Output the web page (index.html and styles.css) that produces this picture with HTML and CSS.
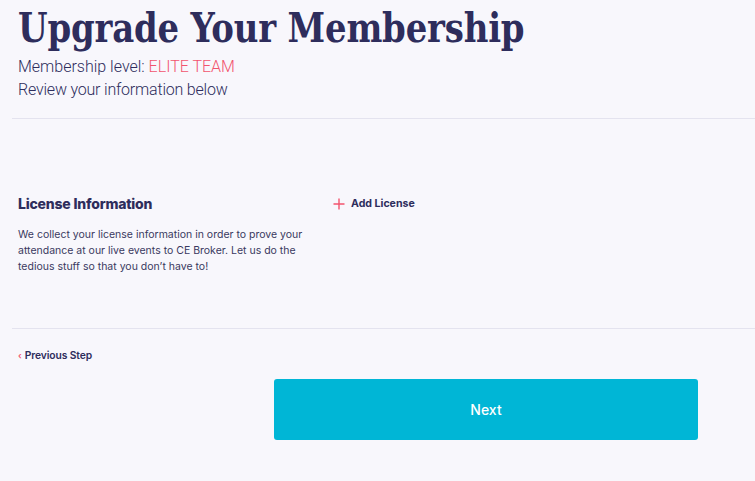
FILE: index.html
```html
<!DOCTYPE html>
<html>
<head>
<meta charset="utf-8">
<link rel="stylesheet" href="styles.css">
</head>
<body>
<div class="page">
  <header class="head">
    <h1 class="title"><span class="title-text">Upgrade Your Membership</span></h1>
    <p class="level">Membership level: <span class="pink">ELITE TEAM</span></p>
    <p class="review">Review your information below</p>
  </header>
  <hr class="rule">
  <section class="license">
    <div class="lic-left">
      <h2 class="lic-title">License Information</h2>
      <p class="lic-text">We collect your license information in order to prove your attendance at our live events to CE Broker. Let us do the tedious stuff so that you don’t have to!</p>
    </div>
    <div class="lic-right">
      <a class="add"><svg class="plus" width="12" height="12" viewBox="0 0 12 12"><path d="M6 0.5V11.5M0.5 6H11.5" stroke="#f2546e" stroke-width="1.4" fill="none"/></svg>Add License</a>
    </div>
  </section>
  <hr class="rule rule2">
  <div class="prev"><span class="chev">‹</span>Previous Step</div>
  <div class="actions">
    <button class="next">Next</button>
  </div>
</div>
</body>
</html>
```
FILE: styles.css
```css
html, body {
  margin: 0;
  padding: 0;
  background: #f8f7fc;
}
body {
  font-family: Roboto, "Liberation Sans", sans-serif;
  color: #2e2d5c;
}
.page {
  width: 755px;
  overflow: hidden;
}
.head {
  padding: 1px 0 0 18px;
  height: 115px;
  box-sizing: border-box;
}
.title {
  margin: 0;
  font-family: "DejaVu Serif Condensed", "DejaVu Serif", serif;
  font-weight: bold;
  font-size: 41px;
  line-height: 54px;
  color: #2e2d5c;
  white-space: nowrap;
}
.title-text {
  display: inline-block;
  letter-spacing: -0.2px;
  transform: scaleX(0.92);
  transform-origin: 0 50%;
}
.level, .review {
  margin: 0;
  font-size: 16px;
  line-height: 23px;
  font-weight: 300;
  color: #2e2d5c;
}
.review { letter-spacing: -0.2px; }
.pink { color: #f2546e; }
.rule {
  margin: 3px 0 0 12px;
  border: 0;
  border-top: 1px solid #e4e3ef;
  height: 0;
}
.license {
  display: flex;
  padding: 75px 0 0 18px;
  height: 209px;
  box-sizing: border-box;
}
.lic-left {
  width: 315px;
}
.lic-title {
  margin: 0;
  font-family: Inter, sans-serif;
  font-weight: 800;
  font-size: 14px;
  line-height: 20px;
  color: #2e2d5c;
  letter-spacing: -0.2px;
}
.lic-text {
  margin: 13px 0 0;
  font-family: Inter, sans-serif;
  font-size: 10.5px;
  line-height: 16px;
  color: #3a3960;
  width: 300px;
}
.lic-right {
  padding-top: 3px;
}
.add {
  display: flex;
  align-items: center;
  gap: 6px;
  font-family: Inter, sans-serif;
  font-weight: 700;
  font-size: 10.6px;
  color: #2e2d5c;
}
.rule2 { margin-top: 0; }
.prev {
  padding: 19px 0 0 18px;
  font-family: Inter, sans-serif;
  font-weight: 600;
  font-size: 10.3px;
  line-height: 14px;
  color: #2e2d5c;
  letter-spacing: -0.1px;
}
.chev {
  color: #f2546e;
  font-size: 9px;
  margin-right: 3px;
}
.actions {
  padding: 16px 0 0 274px;
}
.next {
  width: 424px;
  height: 61px;
  border: 0;
  border-radius: 3px;
  background: #00b6d6;
  color: #fff;
  font-family: Inter, sans-serif;
  font-weight: 500;
  font-size: 14px;
}
```
